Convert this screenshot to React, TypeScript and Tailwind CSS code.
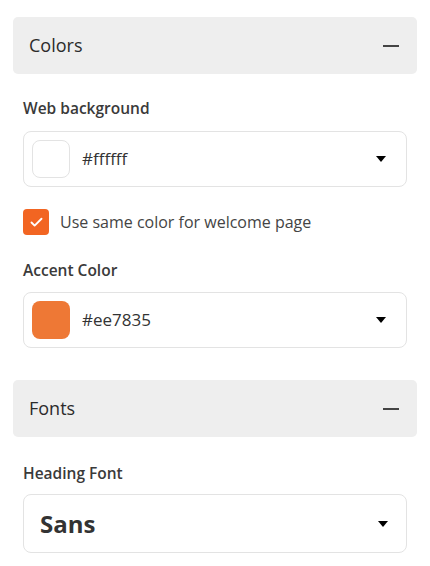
import { Check } from "lucide-react";

function SectionHeader({ title }: { title: string }) {
  return (
    <div className="flex h-[57px] items-center justify-between rounded-[5px] bg-[#eeeeee] pl-4 pr-[18px]">
      <span className="text-[18px] text-[#2b2b2b]">{title}</span>
      <span className="block h-[2px] w-4 bg-[#444444]" />
    </div>
  );
}

function Caret() {
  return (
    <svg width="10" height="6" viewBox="0 0 10 6" className="text-black">
      <path d="M0 0 L10 0 L5 6 Z" fill="currentColor" />
    </svg>
  );
}

function ColorSelect({ color, swatch }: { color: string; swatch: string }) {
  return (
    <div className="flex h-[56px] items-center rounded-[8px] border border-[#e3e3e3] bg-white pl-2 pr-5">
      <span className={`h-[38px] w-[38px] rounded-[8px] ${swatch}`} />
      <span className="ml-3 flex-1 text-[17px] text-[#333333]">{color}</span>
      <Caret />
    </div>
  );
}

function FieldLabel({ children, className }: { children: string; className: string }) {
  return (
    <div className={`text-[15.5px] leading-[22px] font-semibold text-[#3a3a3a] ${className}`}>
      {children}
    </div>
  );
}

export default function App() {
  return (
    <div
      className="h-[566px] w-[430px] overflow-hidden bg-white px-[13px] pt-[17px]"
      style={{ fontFamily: '"Open Sans", "Noto Sans", sans-serif' }}
    >
      {/* Colors */}
      <SectionHeader title="Colors" />
      <div className="px-[10px]">
        <FieldLabel className="mt-[23px]">Web background</FieldLabel>
        <div className="mt-[12px]">
          <ColorSelect color="#ffffff" swatch="border border-[#e3e3e3] bg-white" />
        </div>
        <label className="mt-[22px] flex items-center gap-[11px]">
          <span className="flex h-[26px] w-[26px] items-center justify-center rounded-[4px] bg-[#f26522]">
            <Check className="h-[15px] w-[15px] text-white" strokeWidth={3} />
          </span>
          <span className="text-[16px] leading-[26px] text-[#444444]">Use same color for welcome page</span>
        </label>
        <FieldLabel className="mt-[24px]">Accent Color</FieldLabel>
        <div className="mt-[11px]">
          <ColorSelect color="#ee7835" swatch="bg-[#ee7835]" />
        </div>
      </div>

      {/* Fonts */}
      <div className="mt-[32px]">
        <SectionHeader title="Fonts" />
      </div>
      <div className="px-[10px]">
        <FieldLabel className="mt-[25px]">Heading Font</FieldLabel>
        <div className="mt-[10px] flex h-[59px] items-center rounded-[8px] border border-[#e3e3e3] bg-white pl-4 pr-[18px]">
          <span className="flex-1 text-[24px] font-bold text-[#333333]">Sans</span>
          <Caret />
        </div>
      </div>
    </div>
  );
}
